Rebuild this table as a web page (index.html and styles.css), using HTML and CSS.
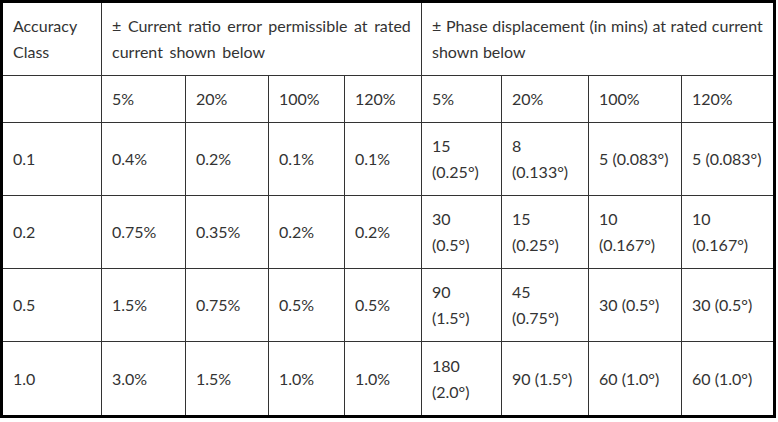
FILE: index.html
```html
<!DOCTYPE html>
<html>
<head>
<meta charset="utf-8">
<link rel="stylesheet" href="styles.css">
</head>
<body>
<table class="ct">
  <colgroup>
    <col class="c1"><col class="c2"><col class="c3"><col class="c4"><col class="c5">
    <col class="c6"><col class="c7"><col class="c8"><col class="c9">
  </colgroup>
  <tr class="r-head">
    <td>Accuracy<br>Class</td>
    <td colspan="4" class="h-ratio">± Current ratio error permissible at rated<br>current shown below</td>
    <td colspan="4" class="h-phase last">± Phase displacement (in mins) at rated current<br>shown below</td>
  </tr>
  <tr class="r-sub">
    <td></td>
    <td>5%</td><td>20%</td><td>100%</td><td>120%</td>
    <td>5%</td><td>20%</td><td>100%</td><td class="last">120%</td>
  </tr>
  <tr>
    <td>0.1</td>
    <td>0.4%</td><td>0.2%</td><td>0.1%</td><td>0.1%</td>
    <td>15<br>(0.25°)</td><td>8<br>(0.133°)</td><td>5 (0.083°)</td><td class="last">5 (0.083°)</td>
  </tr>
  <tr>
    <td>0.2</td>
    <td>0.75%</td><td>0.35%</td><td>0.2%</td><td>0.2%</td>
    <td>30<br>(0.5°)</td><td>15<br>(0.25°)</td><td>10<br>(0.167°)</td><td class="last">10<br>(0.167°)</td>
  </tr>
  <tr>
    <td>0.5</td>
    <td>1.5%</td><td>0.75%</td><td>0.5%</td><td>0.5%</td>
    <td>90<br>(1.5°)</td><td>45<br>(0.75°)</td><td>30 (0.5°)</td><td class="last">30 (0.5°)</td>
  </tr>
  <tr class="r-end">
    <td>1.0</td>
    <td>3.0%</td><td>1.5%</td><td>1.0%</td><td>1.0%</td>
    <td>180<br>(2.0°)</td><td>90 (1.5°)</td><td>60 (1.0°)</td><td class="last">60 (1.0°)</td>
  </tr>
</table>
</body>
</html>
```
FILE: styles.css
```css
html, body {
  margin: 0;
  padding: 0;
  background: #fff;
}
.ct {
  width: 776px;
  table-layout: fixed;
  border-collapse: separate;
  border-spacing: 0;
  border: 3px solid #000;
  font-family: Lato, "Liberation Sans", sans-serif;
  font-size: 16px;
  line-height: 26px;
  color: #333;
}
.ct td {
  box-sizing: border-box;
  padding: 10px 10px;
  border-right: 1px solid #333;
  border-bottom: 1px solid #333;
  vertical-align: middle;
  text-align: left;
  white-space: nowrap;
}
.ct td.last { border-right: none; }
.ct tr.r-end td { border-bottom: none; }
.ct tr { height: 73px; }
.ct tr.r-sub { height: 47px; }
.ct td.h-ratio { word-spacing: 2.5px; }
.ct td.h-phase { word-spacing: 0.5px; }
.c1 { width: 99px; }
.c2 { width: 84px; }
.c3 { width: 83px; }
.c4 { width: 76px; }
.c5 { width: 77px; }
.c6 { width: 80px; }
.c7 { width: 87px; }
.c8 { width: 93px; }
.c9 { width: 91px; }
```
